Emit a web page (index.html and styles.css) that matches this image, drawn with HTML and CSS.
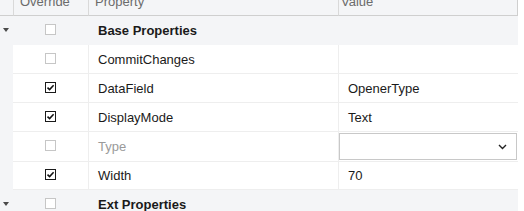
FILE: index.html
```html
<!DOCTYPE html>
<html lang="en">
<head>
    <meta charset="UTF-8">
    <title>Property Grid</title>
    <link rel="stylesheet" href="styles.css">
</head>
<body>
    <div class="grid">
        <div class="row header">
            <div class="cell indent"></div>
            <div class="cell h-override">Override</div>
            <div class="cell h-prop">Property</div>
            <div class="cell h-value">Value</div>
        </div>

        <!-- Base group -->
        <div class="row group">
            <div class="cell indent"><span class="caret"></span></div>
            <div class="cell check"><span class="box"></span></div>
            <div class="cell prop">Base Properties</div>
            <div class="cell value"></div>
        </div>
        <div class="row">
            <div class="cell indent"></div>
            <div class="cell check"><span class="box"></span></div>
            <div class="cell prop">CommitChanges</div>
            <div class="cell value"></div>
        </div>
        <div class="row">
            <div class="cell indent"></div>
            <div class="cell check">
                <span class="box on">
                    <svg width="9" height="9" viewBox="0 0 9 9"><path d="M1.5 4.6 L3.6 6.6 L7.6 2.2" fill="none" stroke="#111" stroke-width="1.5"/></svg>
                </span>
            </div>
            <div class="cell prop">DataField</div>
            <div class="cell value">OpenerType</div>
        </div>
        <div class="row">
            <div class="cell indent"></div>
            <div class="cell check">
                <span class="box on">
                    <svg width="9" height="9" viewBox="0 0 9 9"><path d="M1.5 4.6 L3.6 6.6 L7.6 2.2" fill="none" stroke="#111" stroke-width="1.5"/></svg>
                </span>
            </div>
            <div class="cell prop">DisplayMode</div>
            <div class="cell value">Text</div>
        </div>
        <div class="row">
            <div class="cell indent"></div>
            <div class="cell check"><span class="box"></span></div>
            <div class="cell prop muted">Type</div>
            <div class="cell value edit">
                <div class="select">
                    <svg width="9" height="6" viewBox="0 0 9 6"><path d="M1 1 L4.5 4.5 L8 1" fill="none" stroke="#222" stroke-width="1.4"/></svg>
                </div>
            </div>
        </div>
        <div class="row">
            <div class="cell indent"></div>
            <div class="cell check">
                <span class="box on">
                    <svg width="9" height="9" viewBox="0 0 9 9"><path d="M1.5 4.6 L3.6 6.6 L7.6 2.2" fill="none" stroke="#111" stroke-width="1.5"/></svg>
                </span>
            </div>
            <div class="cell prop">Width</div>
            <div class="cell value">70</div>
        </div>

        <!-- Ext group -->
        <div class="row group">
            <div class="cell indent"><span class="caret"></span></div>
            <div class="cell check"><span class="box"></span></div>
            <div class="cell prop">Ext Properties</div>
            <div class="cell value"></div>
        </div>
    </div>
</body>
</html>
```

FILE: styles.css
```css
:root {
    --group-bg: #f4f5f7;
    --line: #eeeeee;
    --head-line: #cfcfcf;
    --text: #1a1a1a;
    --text-muted: #9a9a9a;
}

body {
    margin: 0;
    background: #ffffff;
    font-family: "Liberation Sans", Arial, sans-serif;
    font-size: 13px;
    color: var(--text);
    overflow: hidden;
}

.grid {
    width: 518px;
    margin-top: -13px;
}

.row {
    display: grid;
    grid-template-columns: 13px 75px 250px 180px;
    height: 29px;
}

.cell {
    display: flex;
    align-items: center;
    box-sizing: border-box;
    border-bottom: 1px solid var(--line);
    min-width: 0;
}

/* header */
.header {
    height: 29px;
    background: var(--group-bg);
    color: #6b6b6b;
}

.header .cell {
    border-bottom: 1px solid var(--head-line);
}

.header .cell + .cell {
    border-left: 1px solid #d9d9d9;
}

.header .h-value {
    border-right: 1px solid var(--head-line);
}

.h-override { padding-left: 6px; }
.h-prop { padding-left: 6px; }
.h-value { padding-left: 2px; }

/* rows */
.indent {
    background: var(--group-bg);
    border-bottom-color: var(--group-bg);
    justify-content: center;
}

.check {
    justify-content: center;
    padding-bottom: 2px;
}

.prop {
    padding-left: 9px;
    border-left: 1px solid var(--line);
}

.value {
    padding-left: 9px;
    border-left: 1px solid var(--line);
}

.muted {
    color: var(--text-muted);
}

.group .cell {
    background: var(--group-bg);
    border-bottom-color: var(--group-bg);
    border-left-color: var(--group-bg);
}

.group .prop {
    font-weight: bold;
}

.caret {
    width: 0;
    height: 0;
    border-left: 3px solid transparent;
    border-right: 3px solid transparent;
    border-top: 4px solid #4a4a4a;
    margin-left: -2px;
}

.box {
    width: 11px;
    height: 11px;
    box-sizing: border-box;
    border: 1px solid #c6c6c6;
    background: #ffffff;
    display: flex;
    align-items: center;
    justify-content: center;
}

.box.on {
    border-color: #1a1a1a;
}

.box svg {
    display: block;
}

.edit {
    padding: 0 1px 1px 0;
}

.select {
    flex: 1;
    height: 27px;
    box-sizing: border-box;
    border: 1px solid #c8c8c8;
    background: #ffffff;
    display: flex;
    align-items: center;
    justify-content: flex-end;
    padding-right: 9px;
    margin-top: 1px;
}

.select svg {
    display: block;
}
```
